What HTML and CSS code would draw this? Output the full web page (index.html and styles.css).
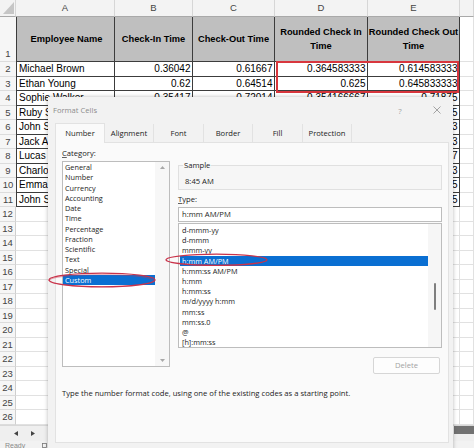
FILE: index.html
```html
<!DOCTYPE html>
<html>
<head>
<meta charset="utf-8">
<title>Format Cells</title>
<link rel="stylesheet" href="styles.css">
</head>
<body>
<div class="sheet">
  <div class="row colhdr">
    <div class="corner"><svg width="11" height="12" viewBox="0 0 11 12"><polygon points="11,0 11,12 0,12" fill="#c6c6c6"/></svg></div>
    <div>A</div><div>B</div><div>C</div><div>D</div><div>E</div><div></div>
  </div>
  <div class="row r1 data">
    <div class="rh">1</div>
    <div class="c h">Employee Name</div>
    <div class="c h">Check-In Time</div>
    <div class="c h">Check-Out Time</div>
    <div class="c h">Rounded Check In<br>Time</div>
    <div class="c h">Rounded Check Out<br>Time</div>
    <div class="f"></div>
  </div>
  <div class="row data"><div class="rh">2</div><div class="c">Michael Brown</div><div class="c n">0.36042</div><div class="c n">0.61667</div><div class="c n">0.364583333</div><div class="c n">0.614583333</div><div class="f"></div></div>
  <div class="row data"><div class="rh">3</div><div class="c">Ethan Young</div><div class="c n">0.62</div><div class="c n">0.64514</div><div class="c n">0.625</div><div class="c n">0.645833333</div><div class="f"></div></div>
  <div class="row data"><div class="rh">4</div><div class="c">Sophie Walker</div><div class="c n">0.35417</div><div class="c n">0.72014</div><div class="c n">0.354166667</div><div class="c n">0.71875</div><div class="f"></div></div>
  <div class="row data"><div class="rh">5</div><div class="c">Ruby S</div><div class="c n"></div><div class="c n"></div><div class="c n"></div><div class="c n">0.65625</div><div class="f"></div></div>
  <div class="row data"><div class="rh">6</div><div class="c">John S</div><div class="c n"></div><div class="c n"></div><div class="c n"></div><div class="c n">0.677083333</div><div class="f"></div></div>
  <div class="row data"><div class="rh">7</div><div class="c">Jack A</div><div class="c n"></div><div class="c n"></div><div class="c n"></div><div class="c n">0.739583333</div><div class="f"></div></div>
  <div class="row data"><div class="rh">8</div><div class="c">Lucas I</div><div class="c n"></div><div class="c n"></div><div class="c n"></div><div class="c n">0.697916667</div><div class="f"></div></div>
  <div class="row data"><div class="rh">9</div><div class="c">Charlo</div><div class="c n"></div><div class="c n"></div><div class="c n"></div><div class="c n">0.708333333</div><div class="f"></div></div>
  <div class="row data"><div class="rh">10</div><div class="c">Emma</div><div class="c n"></div><div class="c n"></div><div class="c n"></div><div class="c n">0.6875</div><div class="f"></div></div>
  <div class="row data"><div class="rh">11</div><div class="c">John S</div><div class="c n"></div><div class="c n"></div><div class="c n"></div><div class="c n">0.71875</div><div class="f"></div></div>
  <div class="row"><div class="rh">12</div><div></div><div></div><div></div><div></div><div></div><div></div></div>
  <div class="row"><div class="rh">13</div><div></div><div></div><div></div><div></div><div></div><div></div></div>
  <div class="row"><div class="rh">14</div><div></div><div></div><div></div><div></div><div></div><div></div></div>
  <div class="row"><div class="rh">15</div><div></div><div></div><div></div><div></div><div></div><div></div></div>
  <div class="row"><div class="rh">16</div><div></div><div></div><div></div><div></div><div></div><div></div></div>
  <div class="row"><div class="rh">17</div><div></div><div></div><div></div><div></div><div></div><div></div></div>
  <div class="row"><div class="rh">18</div><div></div><div></div><div></div><div></div><div></div><div></div></div>
  <div class="row"><div class="rh">19</div><div></div><div></div><div></div><div></div><div></div><div></div></div>
  <div class="row"><div class="rh">20</div><div></div><div></div><div></div><div></div><div></div><div></div></div>
  <div class="row"><div class="rh">21</div><div></div><div></div><div></div><div></div><div></div><div></div></div>
  <div class="row"><div class="rh">22</div><div></div><div></div><div></div><div></div><div></div><div></div></div>
  <div class="row"><div class="rh">23</div><div></div><div></div><div></div><div></div><div></div><div></div></div>
  <div class="row"><div class="rh">24</div><div></div><div></div><div></div><div></div><div></div><div></div></div>
  <div class="row"><div class="rh">25</div><div></div><div></div><div></div><div></div><div></div><div></div></div>
  <div class="row"><div class="rh">26</div><div></div><div></div><div></div><div></div><div></div><div></div></div>
  <div class="tabbar">
    <span class="nav"><svg width="4" height="5" viewBox="0 0 4 5"><polygon points="4,0 4,5 0,2.5" fill="#444"/></svg></span>
    <span class="nav"><svg width="4" height="5" viewBox="0 0 4 5"><polygon points="0,0 0,5 4,2.5" fill="#444"/></svg></span>
    <span class="dots">...</span>
    <span class="spacer"></span>
    <span class="hthumb"></span>
  </div>
  <div class="status">
    <span class="ready">Ready</span>
    <svg class="sticon" width="5" height="5" viewBox="0 0 5 5"><rect x="0.5" y="0.5" width="4" height="4" fill="none" stroke="#777" stroke-width="0.8"/></svg>
  </div>
</div>

<div class="redbox"></div>

<div class="dialog">
  <div class="titlebar">
    <span class="title">Format Cells</span>
    <span class="tbbtn help">?</span>
    <span class="tbbtn close"><svg width="8" height="8" viewBox="0 0 8 8"><path d="M0.5 0.5L7.5 7.5M7.5 0.5L0.5 7.5" stroke="#8e8e8e" stroke-width="0.8" fill="none"/></svg></span>
  </div>
  <div class="tabs">
    <div class="tab active">Number</div>
    <div class="tab">Alignment</div>
    <div class="tab">Font</div>
    <div class="tab">Border</div>
    <div class="tab">Fill</div>
    <div class="tab">Protection</div>
  </div>
  <div class="panel">
    <div class="cols">
      <div class="leftcol">
        <div class="label cat">Category:</div>
        <div class="listbox">
          <div class="items">
            <div class="item">General</div>
            <div class="item">Number</div>
            <div class="item">Currency</div>
            <div class="item">Accounting</div>
            <div class="item">Date</div>
            <div class="item">Time</div>
            <div class="item">Percentage</div>
            <div class="item">Fraction</div>
            <div class="item">Scientific</div>
            <div class="item">Text</div>
            <div class="item">Special</div>
            <div class="item sel">Custom</div>
          </div>
          <div class="vscroll">
            <svg width="5" height="3" viewBox="0 0 5 3"><polygon points="0,3 5,3 2.5,0" fill="#a8a8a8"/></svg>
            <svg width="5" height="3" viewBox="0 0 5 3"><polygon points="0,0 5,0 2.5,3" fill="#a8a8a8"/></svg>
          </div>
        </div>
      </div>
      <div class="rightcol">
        <fieldset class="sample">
          <legend>Sample</legend>
          <div class="sampleval">8:45 AM</div>
        </fieldset>
        <div class="label type">Type:</div>
        <div class="input">h:mm AM/PM</div>
        <div class="typelist">
          <div class="items">
            <div class="item">d-mmm-yy</div>
            <div class="item">d-mmm</div>
            <div class="item">mmm-yy</div>
            <div class="item sel">h:mm AM/PM</div>
            <div class="item">h:mm:ss AM/PM</div>
            <div class="item">h:mm</div>
            <div class="item">h:mm:ss</div>
            <div class="item">m/d/yyyy h:mm</div>
            <div class="item">mm:ss</div>
            <div class="item">mm:ss.0</div>
            <div class="item">@</div>
            <div class="item">[h]:mm:ss</div>
          </div>
          <div class="vscroll2"><div class="thumb"></div></div>
        </div>
        <div class="btnrow"><div class="btn">Delete</div></div>
      </div>
    </div>
    <div class="desc">Type the number format code, using one of the existing codes as a starting point.</div>
  </div>
</div>

<svg class="marks" width="474" height="448" viewBox="0 0 474 448">
  <ellipse cx="102" cy="280" rx="53" ry="6.8" fill="none" stroke="#c9334a" stroke-width="1.3"/>
  <ellipse cx="101" cy="280.6" rx="52" ry="6" fill="none" stroke="#c9334a" stroke-width="0.6" opacity="0.7"/>
  <ellipse cx="216.5" cy="259.8" rx="50.5" ry="5.6" fill="none" stroke="#c9334a" stroke-width="1.3"/>
</svg>
</body>
</html>
```

FILE: styles.css
```css
* { box-sizing: border-box; margin: 0; padding: 0; }
html, body { width: 474px; height: 448px; overflow: hidden; }
body {
  position: relative;
  background: #ffffff;
  font-family: "Liberation Sans", Arial, sans-serif;
  color: #000;
}

/* ---------- spreadsheet ---------- */
.sheet { display: flex; flex-direction: column; height: 448px; }
.row {
  flex: none;
  display: grid;
  grid-template-columns: 16px 99px 78px 82px 93px 92px 14px;
  height: 14.5px;
}
.row > div {
  border-right: 1px solid #e1e1e1;
  border-bottom: 1px solid #e1e1e1;
  font-size: 10px;
  line-height: 13.5px;
  white-space: nowrap;
  overflow: hidden;
  padding: 0 2px;
}
.row > .rh {
  background: #f6f6f6;
  color: #444;
  font-size: 9.5px;
  text-align: center;
  padding: 0;
  border-right-color: #cfcfcf;
  border-bottom-color: #dcdcdc;
}
.data > .c { border-color: #3c3c3c; }
.data > .c:nth-child(2) { border-left: 1px solid #3c3c3c; padding-left: 2px; }
.data > .rh { border-right: none; }
.n { text-align: right; }
.row > .n { padding-right: 1.5px; }

.colhdr { height: 17px; }
.colhdr > div {
  background: #f3f3f3;
  color: #444;
  font-size: 9.5px;
  line-height: 16px;
  text-align: center;
  border-right-color: #d6d6d6;
  border-bottom: 1px solid #a9a9a9;
  padding: 0;
}
.colhdr > .corner { display: flex; align-items: flex-end; justify-content: flex-end; padding: 0 1px 2px 0; }

.r1 { height: 45px; }
.r1 > .rh { display: flex; align-items: flex-end; justify-content: center; line-height: 12px; padding-bottom: 1px; }
.r1 > .h {
  background: #bfbfbf;
  font-weight: bold;
  font-size: 9.3px;
  line-height: 14px;
  text-align: center;
  display: flex;
  align-items: center;
  justify-content: center;
  padding: 0;
}

.tabbar {
  flex: none;
  height: 16px;
  background: #efefef;
  border-top: 1px solid #d8d8d8;
  display: flex;
  align-items: center;
  padding-left: 14px;
}
.nav { display: flex; width: 17px; }
.dots { color: #555; font-size: 8px; line-height: 8px; margin-top: -4px; }
.spacer { flex: 1; }
.hthumb { width: 20px; height: 8px; background: #727272; align-self: flex-start; margin-top: 0.5px; }

.status {
  flex: none;
  height: 8px;
  background: #f2f2f2;
  display: flex;
  align-items: flex-start;
  padding-left: 5px;
  padding-top: 1px;
}
.ready { color: #8a8a8a; font-size: 7px; line-height: 7px; width: 37px; }
.sticon { margin-top: 1px; }

.redbox {
  position: absolute;
  left: 276px;
  top: 61px;
  width: 183px;
  height: 32px;
  border: 2px solid #d8363d;
}

/* ---------- dialog ---------- */
.dialog {
  position: absolute;
  left: 48px;
  top: 97px;
  width: 405px;
  height: 362px;
  background: #f2f2f2;
  box-shadow: 0 0 4px rgba(0, 0, 0, 0.28);
  font-family: "Open Sans", "Noto Sans", sans-serif;
  font-size: 7.65px;
  color: #1c1c1c;
}
.titlebar {
  height: 26px;
  display: flex;
  align-items: center;
  padding-left: 5px;
}
.title { flex: 1; color: #8c8c8c; font-size: 7.6px; }
.tbbtn { width: 32px; display: flex; justify-content: center; align-items: center; color: #a2a2a2; font-size: 8px; }
.help { margin-right: 5px; }

.tabs { display: flex; margin-left: 7px; height: 19px; }
.tab {
  width: 50px;
  text-align: center;
  line-height: 18px;
  border-right: 1px solid #e2e2e2;
  margin-top: 1px;
  color: #1c1c1c;
}
.tab:nth-child(even) { width: 49px; }
.tab.active {
  background: #fafafa;
  border: 1px solid #e2e2e2;
  border-bottom: none;
  margin-top: 0;
  line-height: 19px;
  position: relative;
  z-index: 1;
  height: 20px;
}

.panel {
  margin-left: 7px;
  width: 394px;
  height: 301px;
  background: #fafafa;
  border: 1px solid #e2e2e2;
  padding: 5px 6px 0 6px;
}
.cols { display: flex; gap: 8px; }
.leftcol { width: 108px; }
.rightcol { width: 264px; display: flex; flex-direction: column; }
.label {
  height: 13px;
  line-height: 11px;
  background-image: linear-gradient(#1c1c1c, #1c1c1c);
  background-repeat: no-repeat;
  background-size: 4.8px 0.7px;
  background-position: 0 9.4px;
}

.listbox {
  height: 206px;
  border: 1px solid #bdbdbd;
  background: #fff;
  display: flex;
}
.items { flex: 1; }
.item { height: 10px; line-height: 10px; font-size: 7.3px; padding-left: 2px; white-space: nowrap; }
.listbox .item:nth-child(4n+2) { height: 11px; line-height: 11px; }
.item.sel { background: #0a6fd2; color: #fff; }
.vscroll {
  width: 14px;
  background: #f7f7f7;
  display: flex;
  flex-direction: column;
  justify-content: space-between;
  align-items: center;
  padding: 4px 0 4px 1px;
}

.sample {
  margin-top: 13px;
  height: 29px;
  border: 1px solid #e0e0e0;
  background: #f6f6f6;
  padding: 0 0 0 4px;
  min-width: 0;
}
.sample legend { padding: 0 1px; line-height: 8px; color: #1c1c1c; }
.sampleval { margin-top: 7px; line-height: 10px; padding-left: 2px; }

.label.type {
  margin-top: 5px;
  height: 12px;
  line-height: 9px;
  background-size: 4.3px 0.7px;
  background-position: 0 8.4px;
}
.input {
  height: 15px;
  border: 1px solid #bdbdbd;
  background: #fff;
  padding-left: 3px;
  line-height: 13px;
}
.typelist {
  margin-top: 1px;
  height: 125px;
  border: 1px solid #bdbdbd;
  background: #fff;
  display: flex;
}
.typelist .items { padding: 1px 0 0 1px; }
.typelist .item:nth-child(5n+3) { height: 11px; line-height: 11px; }
.vscroll2 { width: 13px; background: #f6f6f6; display: flex; justify-content: center; }
.thumb { width: 2px; height: 27px; margin-top: 59px; background: #7f7f7f; border-radius: 1px; }

.btnrow { display: flex; justify-content: flex-end; margin-top: 9px; padding-right: 2px; }
.btn {
  width: 67px;
  height: 17px;
  border: 1px solid #d6d6d6;
  border-radius: 2px;
  background: #fdfdfd;
  color: #a3a3a3;
  text-align: center;
  line-height: 15px;
}
.desc { margin-top: 14px; line-height: 10px; white-space: nowrap; }

.marks { position: absolute; left: 0; top: 0; pointer-events: none; }
```
